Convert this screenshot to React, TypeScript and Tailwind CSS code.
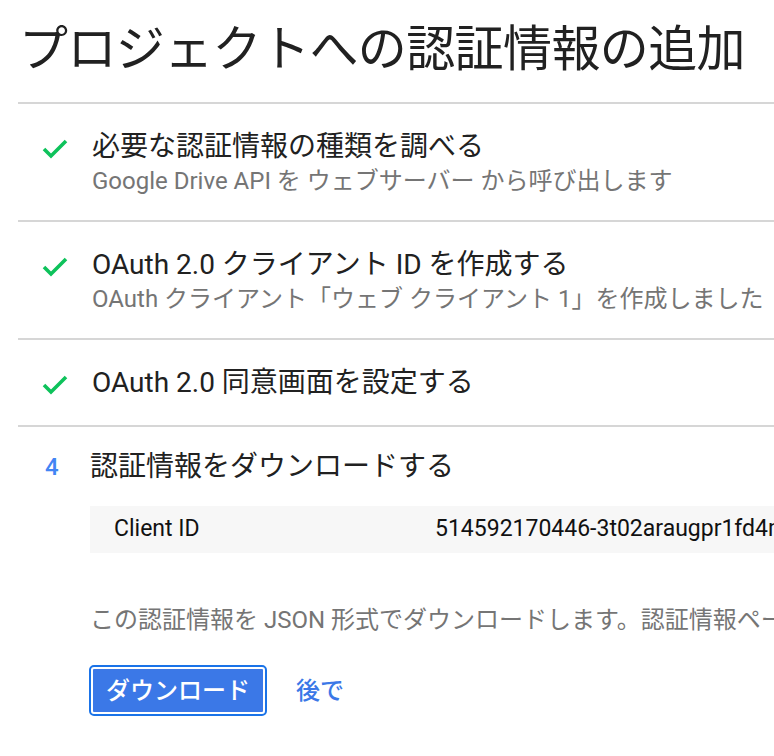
const font = "font-['Roboto','Noto_Sans_CJK_JP',sans-serif]";

function Check() {
  return (
    <svg width="26" height="20" viewBox="0 0 26 20" className="shrink-0">
      <path d="M2 10 L9 17 L24 2" fill="none" stroke="#0ec25b" strokeWidth="3.6" />
    </svg>
  );
}

type Step = { title: string; sub?: string };

const steps: Step[] = [
  { title: '必要な認証情報の種類を調べる', sub: 'Google Drive API を ウェブサーバー から呼び出します' },
  { title: 'OAuth 2.0 クライアント ID を作成する', sub: 'OAuth クライアント「ウェブ クライアント 1」を作成しました' },
  { title: 'OAuth 2.0 同意画面を設定する' },
];

export default function App() {
  return (
    <div className={`${font} w-[774px] h-[756px] overflow-hidden bg-white text-[#212121] whitespace-nowrap`}>
      <h1 className="pl-[19px] pt-[20px] h-[102px] text-[49px] leading-[60px] tracking-[-0.6px]">
        プロジェクトへの認証情報の追加
      </h1>
      <div className="ml-[18px]">
        {steps.map((s) => (
          <div
            key={s.title}
            className={`border-t-2 border-[#d6d6d6] flex items-start gap-[24px] pl-[24px] pt-[25px] ${s.sub ? 'h-[118px]' : 'h-[87px]'}`}
          >
            <div className="pt-[10px]">
              <Check />
            </div>
            <div>
              <div className="text-[28px] leading-[36px]">{s.title}</div>
              {s.sub && <div className="text-[24px] leading-[32px] text-[#757575]">{s.sub}</div>}
            </div>
          </div>
        ))}
        <div className="border-t-2 border-[#d6d6d6] pt-[22px]">
          <div className="flex items-center pl-[27px]">
            <span className="w-[45px] text-[24px] font-medium text-[#4285f4]">4</span>
            <span className="text-[28px] leading-[36px]">認証情報をダウンロードする</span>
          </div>
          <div className="ml-[72px] mt-[21px] h-[47px] bg-[#f7f7f7] flex items-center text-[23px] text-[#111]">
            <span className="pl-[24px] w-[345px] shrink-0">Client ID</span>
            <span>514592170446-3t02araugpr1fd4m5dmd0u2v1a2bo0g.apps.googleusercontent.com</span>
          </div>
          <p className="ml-[72px] mt-[51px] text-[24px] leading-[32px] text-[#757575]">
            この認証情報を JSON 形式でダウンロードします。認証情報ページからいつでもダウンロードできます。
          </p>
          <div className="ml-[73px] mt-[31px] flex items-center gap-[31px]">
            <button className="h-[47px] px-[13px] rounded-[3px] bg-[#3b78e7] text-white text-[24px] border-2 border-white outline-2 outline-[#1a73e8] font-medium">
              ダウンロード
            </button>
            <button className="text-[24px] text-[#3b78e7] font-medium">後で</button>
          </div>
        </div>
      </div>
    </div>
  );
}
